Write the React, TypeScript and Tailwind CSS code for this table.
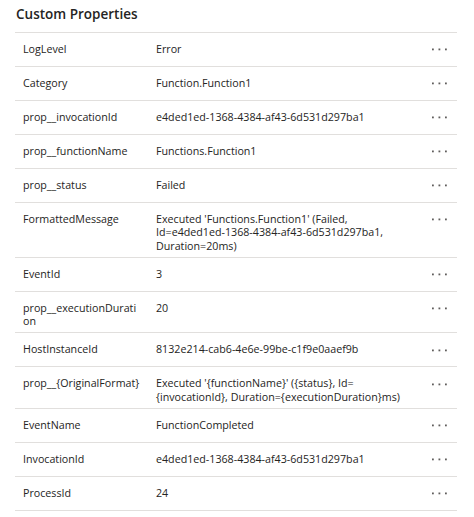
import React from "react";

interface PropRow {
  name: string;
  value: string;
}

const rows: PropRow[] = [
  { name: "LogLevel", value: "Error" },
  { name: "Category", value: "Function.Function1" },
  { name: "prop__invocationId", value: "e4ded1ed-1368-4384-af43-6d531d297ba1" },
  { name: "prop__functionName", value: "Functions.Function1" },
  { name: "prop__status", value: "Failed" },
  {
    name: "FormattedMessage",
    value:
      "Executed 'Functions.Function1' (Failed, Id=e4ded1ed-1368-4384-af43-6d531d297ba1, Duration=20ms)",
  },
  { name: "EventId", value: "3" },
  { name: "prop__executionDuration", value: "20" },
  { name: "HostInstanceId", value: "8132e214-cab6-4e6e-99be-c1f9e0aaef9b" },
  {
    name: "prop__{OriginalFormat}",
    value:
      "Executed '{functionName}' ({status}, Id={invocationId}, Duration={executionDuration}ms)",
  },
  { name: "EventName", value: "FunctionCompleted" },
  { name: "InvocationId", value: "e4ded1ed-1368-4384-af43-6d531d297ba1" },
  { name: "ProcessId", value: "24" },
];

const MoreDots = () => (
  <svg width="15" height="3" viewBox="0 0 15 3" fill="#605e5c">
    <rect x="0" y="0.5" width="1.8" height="1.8" />
    <rect x="6.5" y="0.5" width="1.8" height="1.8" />
    <rect x="13" y="0.5" width="1.8" height="1.8" />
  </svg>
);

const App: React.FC = () => {
  return (
    <div
      className="w-[474px] min-h-[517px] bg-white text-[#252423]"
      style={{ fontFamily: '"Open Sans", "Noto Sans", sans-serif' }}
    >
      <div className="h-[32px] pt-[4px] pl-[16px] text-[13.5px] leading-[20px] font-semibold">
        Custom Properties
      </div>

      <div className="ml-[15px] w-[442px] border-t border-[#e1dfdd] text-[10.7px] leading-[13.3px]">
        {rows.map((row) => (
          <div
            key={row.name}
            className="flex min-h-[34px] border-b border-[#e1dfdd] pt-[10px] pb-[4px]"
          >
            <div className="w-[141px] shrink-0 pl-[8px] pr-[14px] break-all">
              {row.name}
            </div>
            <div className="flex-1 pr-[10px]">{row.value}</div>
            {/* row actions */}
            <div className="w-[37px] shrink-0 pl-[12px] h-[13.3px] flex items-center">
              <MoreDots />
            </div>
          </div>
        ))}
      </div>
    </div>
  );
};

export default App;
